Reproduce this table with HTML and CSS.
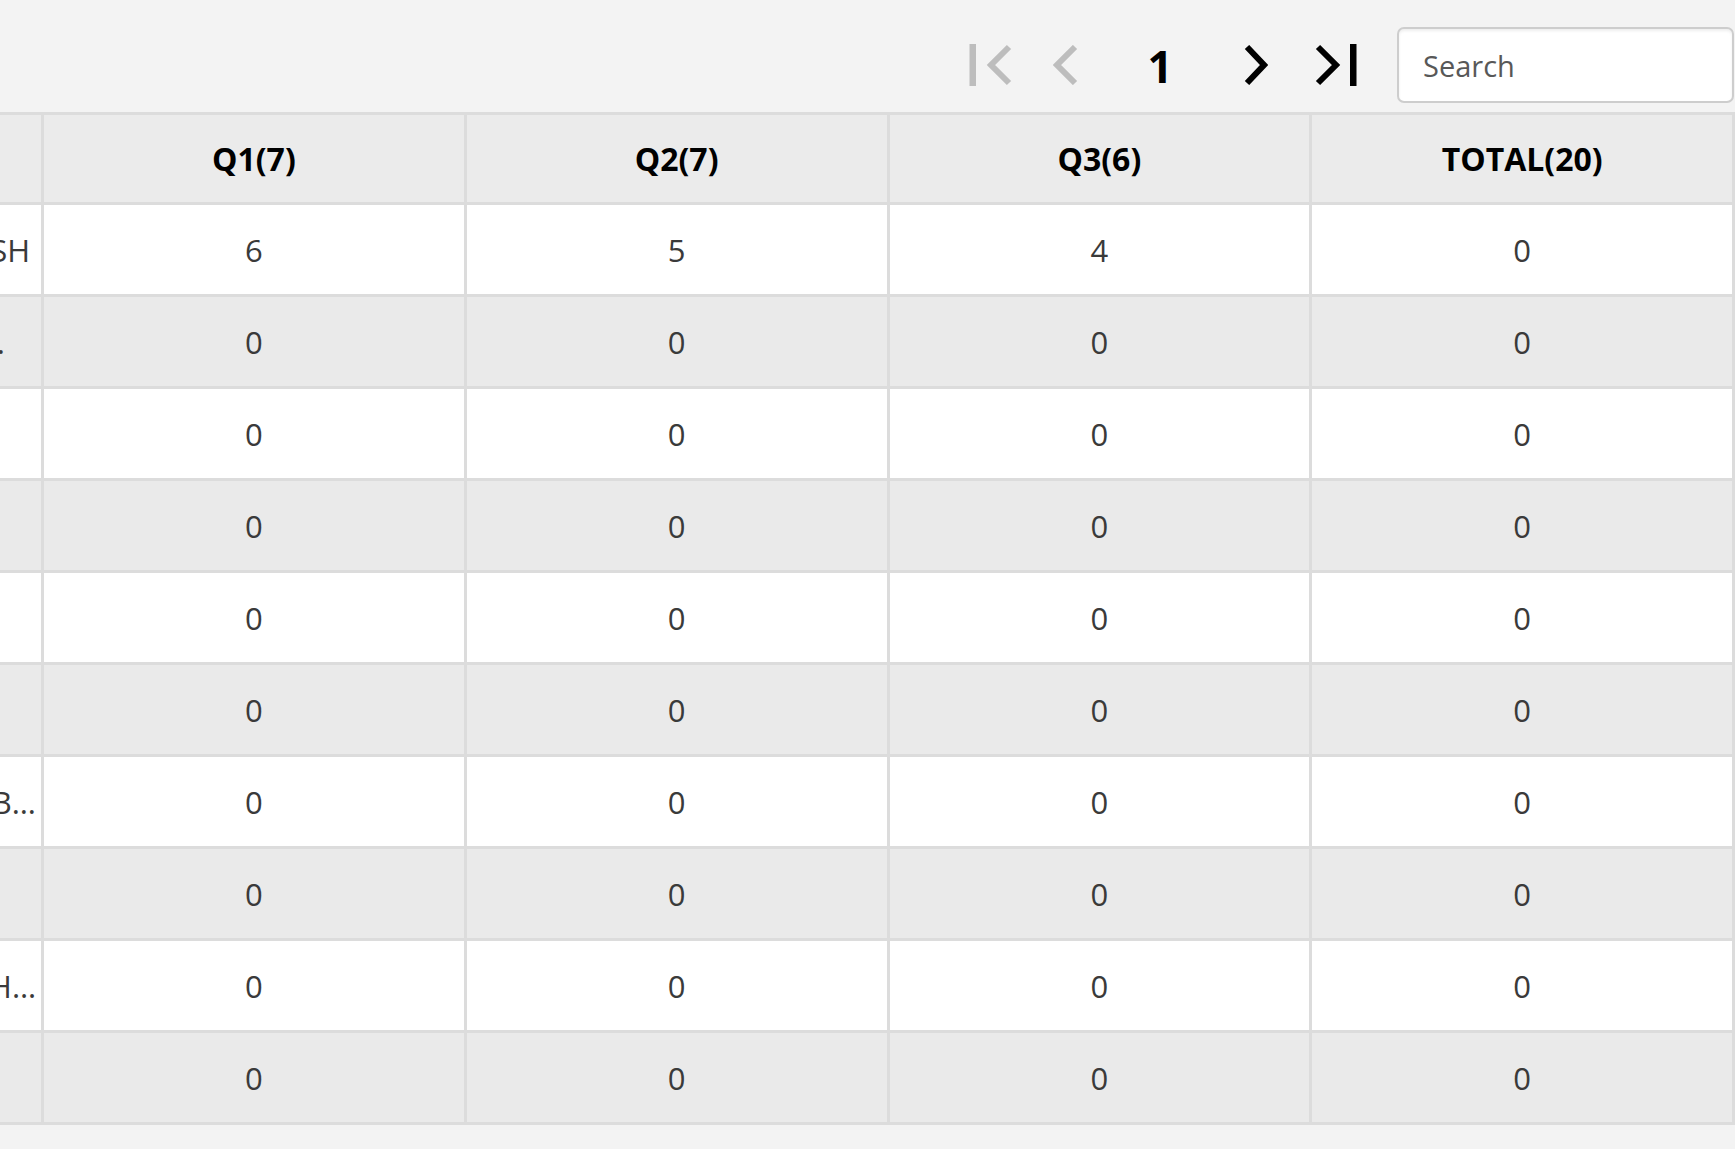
FILE: index.html
```html
<!DOCTYPE html>
<html lang="en">
<head>
<meta charset="utf-8">
<title>Scores</title>
<link rel="stylesheet" href="styles.css">
</head>
<body>
<div class="page">
  <div class="toolbar">
    <button class="pg pg-first" aria-label="First page">
      <svg width="43" height="42" viewBox="0 0 43 42"><rect x="0.5" y="0" width="6.5" height="42" fill="#bdbdbd"/><polyline points="40,3 22,21 40,39" fill="none" stroke="#bdbdbd" stroke-width="6"/></svg>
    </button>
    <button class="pg pg-prev" aria-label="Previous page">
      <svg width="25" height="40" viewBox="0 0 25 40"><polyline points="22,2 4,20 22,38" fill="none" stroke="#bdbdbd" stroke-width="6"/></svg>
    </button>
    <span class="pg-num">1</span>
    <button class="pg pg-next" aria-label="Next page">
      <svg width="24" height="40" viewBox="0 0 24 40"><polyline points="3,2 20,20 3,38" fill="none" stroke="#000" stroke-width="6"/></svg>
    </button>
    <button class="pg pg-last" aria-label="Last page">
      <svg width="42" height="42" viewBox="0 0 42 42"><polyline points="3,3 21,21 3,39" fill="none" stroke="#000" stroke-width="6"/><rect x="35" y="0" width="6.5" height="42" fill="#000"/></svg>
    </button>
    <input class="search" type="text" placeholder="Search">
  </div>
  <div class="table-wrap">
    <div class="grid">
      <div class="row head">
        <div class="cell name">NAME</div>
        <div class="cell">Q1(7)</div>
        <div class="cell">Q2(7)</div>
        <div class="cell">Q3(6)</div>
        <div class="cell">TOTAL(20)</div>
      </div>
      <div class="row">
        <div class="cell name name-end name-fit">ENGLISH</div>
        <div class="cell">6</div><div class="cell">5</div><div class="cell">4</div><div class="cell">0</div>
      </div>
      <div class="row alt">
        <div class="cell name name-end name-dot">MATHS.</div>
        <div class="cell">0</div><div class="cell">0</div><div class="cell">0</div><div class="cell">0</div>
      </div>
      <div class="row">
        <div class="cell name">ART</div>
        <div class="cell">0</div><div class="cell">0</div><div class="cell">0</div><div class="cell">0</div>
      </div>
      <div class="row alt">
        <div class="cell name">MUSIC</div>
        <div class="cell">0</div><div class="cell">0</div><div class="cell">0</div><div class="cell">0</div>
      </div>
      <div class="row">
        <div class="cell name">DRAMA</div>
        <div class="cell">0</div><div class="cell">0</div><div class="cell">0</div><div class="cell">0</div>
      </div>
      <div class="row alt">
        <div class="cell name">P.E.</div>
        <div class="cell">0</div><div class="cell">0</div><div class="cell">0</div><div class="cell">0</div>
      </div>
      <div class="row">
        <div class="cell name name-end">CLASS SUB…</div>
        <div class="cell">0</div><div class="cell">0</div><div class="cell">0</div><div class="cell">0</div>
      </div>
      <div class="row alt">
        <div class="cell name">LATIN</div>
        <div class="cell">0</div><div class="cell">0</div><div class="cell">0</div><div class="cell">0</div>
      </div>
      <div class="row">
        <div class="cell name name-end">SCIENCE MATH…</div>
        <div class="cell">0</div><div class="cell">0</div><div class="cell">0</div><div class="cell">0</div>
      </div>
      <div class="row alt">
        <div class="cell name">HISTORY</div>
        <div class="cell">0</div><div class="cell">0</div><div class="cell">0</div><div class="cell">0</div>
      </div>
    </div>
  </div>
</div>
</body>
</html>
```

FILE: styles.css
```css
html, body {
  margin: 0;
  padding: 0;
  background: #f3f3f3;
}

body {
  font-family: "Open Sans", "Liberation Sans", sans-serif;
}

.page {
  width: 1735px;
  height: 1149px;
  overflow: hidden;
  background: #f3f3f3;
}

.toolbar {
  height: 112px;
  box-sizing: border-box;
  padding-top: 18px;
  padding-right: 1px;
  display: flex;
  align-items: center;
  justify-content: flex-end;
}

.pg {
  border: 0;
  background: transparent;
  padding: 0;
  margin: 0;
  display: flex;
  align-items: center;
  justify-content: center;
  cursor: pointer;
}

.pg svg {
  display: block;
}

.pg-first { margin-right: 41px; }
.pg-prev  { margin-right: 52px; }
.pg-next  { margin-right: 47px; }
.pg-last  { margin-right: 40px; }

.pg-num {
  width: 60px;
  margin-right: 54px;
  text-align: center;
  font-size: 44px;
  font-weight: 700;
  line-height: 1;
  color: #000;
  padding-top: 2px;
}

.search {
  width: 337px;
  height: 76px;
  box-sizing: border-box;
  border: 2px solid #cdcdcd;
  border-radius: 7px;
  background: #fff;
  box-shadow: inset 0 2px 3px rgba(0, 0, 0, 0.07);
  padding: 0 0 0 24px;
  margin: 0;
  font-family: "Open Sans", "Liberation Sans", sans-serif;
  font-size: 29px;
  color: #333;
  outline: none;
}

.search::placeholder {
  color: #585858;
}

.table-wrap {
  width: 1735px;
  overflow: hidden;
}

.grid {
  display: grid;
  grid-template-columns: 200px repeat(4, 419.75px);
  grid-template-rows: 87px repeat(10, 89px);
  gap: 3px;
  padding: 3px;
  width: max-content;
  margin-left: -162px;
  background: #dcdcdc;
}

.row {
  display: contents;
}

.cell {
  display: flex;
  align-items: center;
  justify-content: center;
  background: #fff;
  color: #3a3a3a;
  font-size: 31px;
  white-space: nowrap;
  overflow: hidden;
}

.row.alt .cell {
  background: #eaeaea;
}

.row.head .cell {
  background: #ebebeb;
  color: #000;
  font-weight: 700;
  font-size: 32px;
}

.cell.name {
  justify-content: flex-start;
  padding: 0 5px;
}

.cell.name-end {
  justify-content: flex-end;
}

.cell.name-fit {
  padding-right: 11px;
}

.cell.name-dot {
  padding-right: 36px;
}
```
